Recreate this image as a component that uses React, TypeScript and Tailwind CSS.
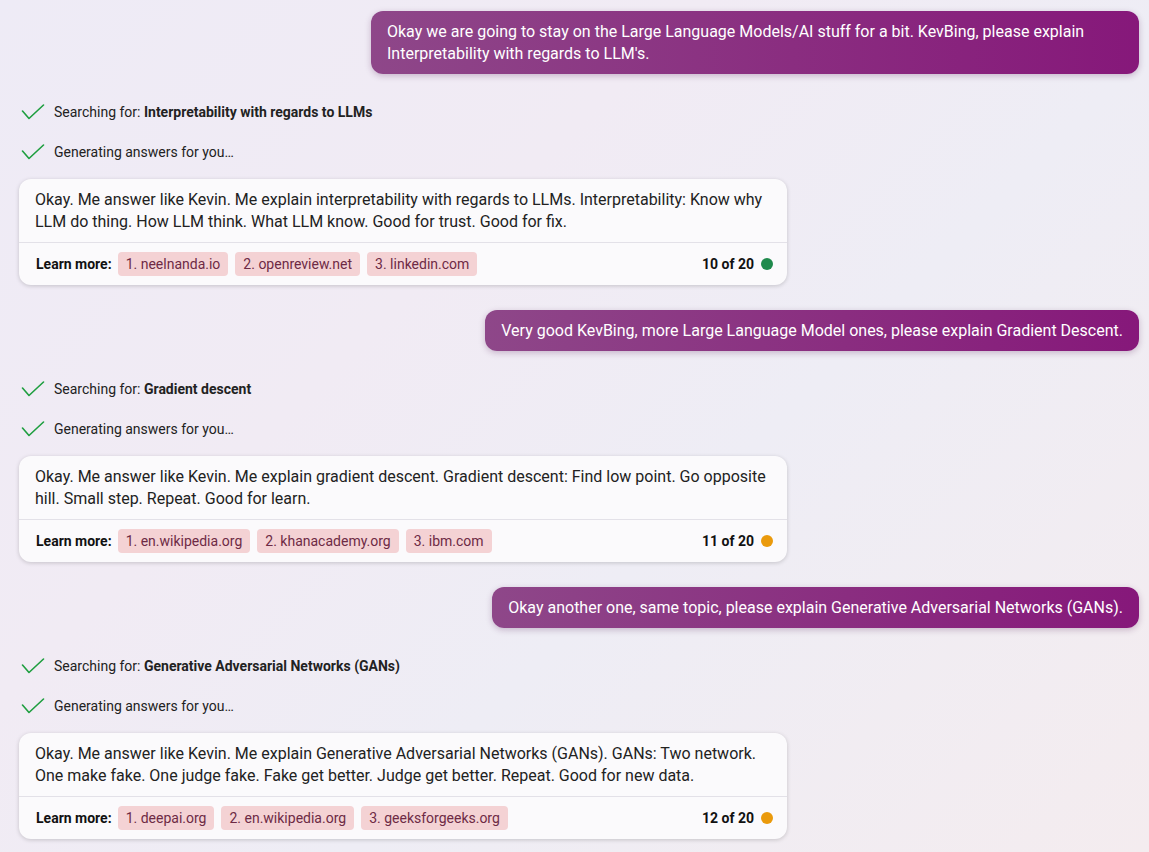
import type { ReactNode } from 'react'

type Exchange = {
  question: string
  query: string
  answer: string
  sources: string[]
  count: number
  dot: string
}

const exchanges: Exchange[] = [
  {
    question:
      "Okay we are going to stay on the Large Language Models/AI stuff for a bit. KevBing, please explain Interpretability with regards to LLM's.",
    query: 'Interpretability with regards to LLMs',
    answer:
      'Okay. Me answer like Kevin. Me explain interpretability with regards to LLMs. Interpretability: Know why LLM do thing. How LLM think. What LLM know. Good for trust. Good for fix.',
    sources: ['neelnanda.io', 'openreview.net', 'linkedin.com'],
    count: 10,
    dot: 'bg-[#1f8a4c]',
  },
  {
    question: 'Very good KevBing, more Large Language Model ones, please explain Gradient Descent.',
    query: 'Gradient descent',
    answer:
      'Okay. Me answer like Kevin. Me explain gradient descent. Gradient descent: Find low point. Go opposite hill. Small step. Repeat. Good for learn.',
    sources: ['en.wikipedia.org', 'khanacademy.org', 'ibm.com'],
    count: 11,
    dot: 'bg-[#ea9a0c]',
  },
  {
    question: 'Okay another one, same topic, please explain Generative Adversarial Networks (GANs).',
    query: 'Generative Adversarial Networks (GANs)',
    answer:
      'Okay. Me answer like Kevin. Me explain Generative Adversarial Networks (GANs). GANs: Two network. One make fake. One judge fake. Fake get better. Judge get better. Repeat. Good for new data.',
    sources: ['deepai.org', 'en.wikipedia.org', 'geeksforgeeks.org'],
    count: 12,
    dot: 'bg-[#ea9a0c]',
  },
]

function Check() {
  return (
    <svg width="24" height="16" viewBox="0 0 24 16" fill="none" className="shrink-0">
      <polyline points="1.5,7 8,14.5 22.5,1" stroke="#1e9e3f" strokeWidth="1.6" strokeLinecap="round" strokeLinejoin="round" />
    </svg>
  )
}

function StatusRow({ children }: { children: ReactNode }) {
  return (
    <div className="flex h-5 items-center gap-[9px] pl-[21px] text-sm text-[#222]">
      <Check />
      <span>{children}</span>
    </div>
  )
}

function Block({ item }: { item: Exchange }) {
  return (
    <div className="flex flex-col">
      <div className="flex justify-end pr-[10px]">
        <div className="max-w-[768px] rounded-xl bg-[linear-gradient(90deg,#8e4789_0%,#8a2d80_55%,#86187a_100%)] px-4 py-[9.5px] text-base leading-[22px] text-white shadow-[0_2px_6px_rgba(80,20,80,0.25)]">
          {item.question}
        </div>
      </div>

      <div className="mt-7 flex flex-col gap-5">
        <StatusRow>
          Searching for: <span className="font-bold">{item.query}</span>
        </StatusRow>
        <StatusRow>Generating answers for you…</StatusRow>
      </div>

      <div className="mt-[17px] ml-[19px] w-[768px] rounded-xl bg-[#fbfafc] shadow-[0_1px_4px_rgba(0,0,0,0.18)]">
        <p className="px-4 pt-2.5 pb-[9px] text-base leading-[22px] text-[#222]">{item.answer}</p>
        <div className="flex items-center border-t border-[#e3e1e8] py-[9px] pr-[14px] pl-[17px]">
          <span className="mr-[6px] text-sm font-bold text-[#111]">Learn more:</span>
          <div className="flex gap-[7px]">
            {item.sources.map((src, i) => (
              <span
                key={src}
                className="flex h-6 items-center rounded bg-[#f4d2d4] px-2 text-sm text-[#6e2a45]"
              >
                {i + 1}. {src}
              </span>
            ))}
          </div>
          <div className="ml-auto flex items-center gap-[7px] text-sm font-bold text-[#111]">
            {item.count} of 20
            <span className={`h-3 w-3 rounded-full ${item.dot}`} />
          </div>
        </div>
      </div>
    </div>
  )
}

export default function App() {
  return (
    <div className="min-h-[852px] w-full bg-[linear-gradient(135deg,#eeebf6_0%,#f1ebf4_35%,#eeedf5_60%,#f4ecef_100%)] pt-[11px] font-['Roboto',sans-serif]">
      <div className="flex flex-col gap-[25px]">
        {exchanges.map((item) => (
          <Block key={item.query} item={item} />
        ))}
      </div>
    </div>
  )
}
